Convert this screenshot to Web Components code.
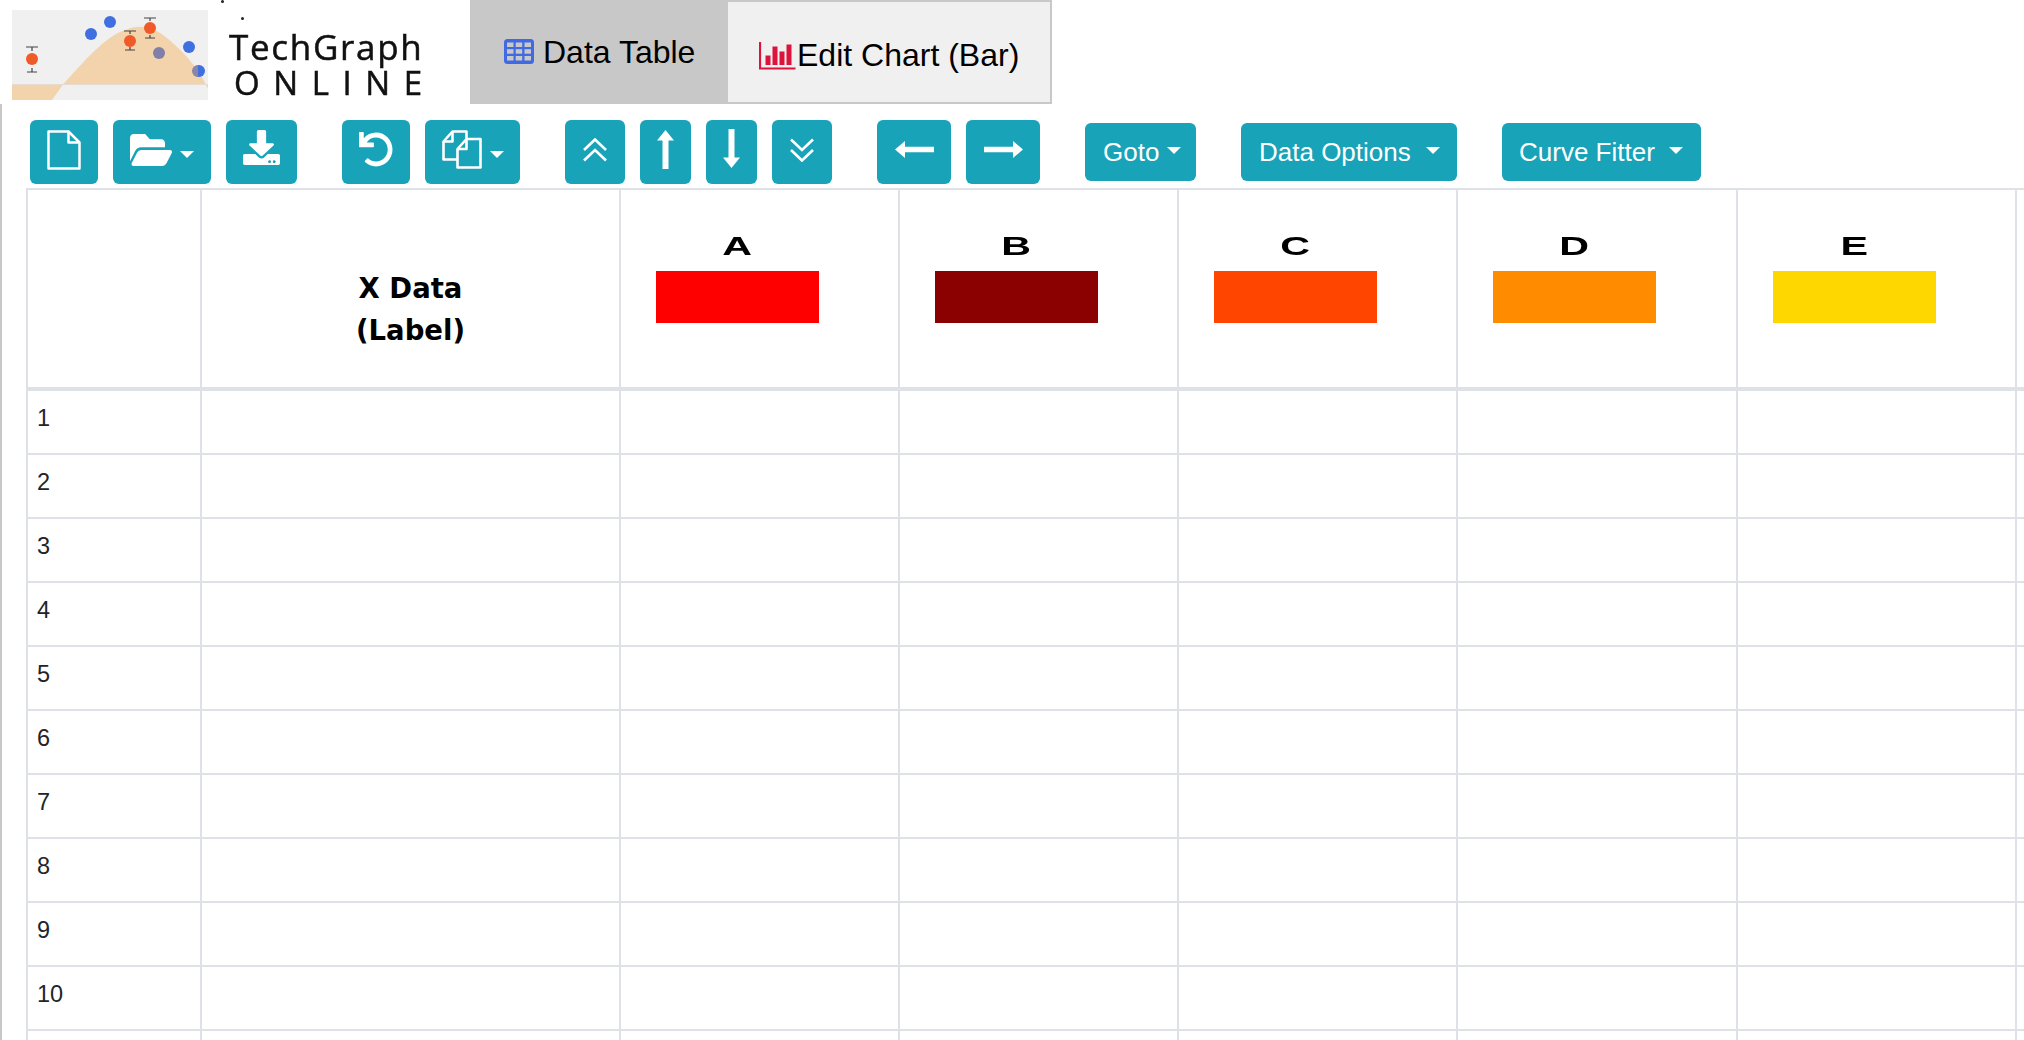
<!DOCTYPE html>
<html>
<head>
<meta charset="utf-8">
<title>TechGraph Online</title>
<style>
html, body { margin: 0; height: 100%; background: #fff; overflow: hidden; }
body { font-family: "Liberation Sans", Arial, sans-serif; color: #212529; }
</style>
</head>
<body>
<tg-header>
  <tg-logo slot="logo"></tg-logo>
  <tg-tab slot="tabs" active>
    <svg slot="icon" width="30" height="25" viewBox="0 0 30 25"><rect width="30" height="25" rx="3.5" fill="#4169e1"/><g fill="#c8c8c8"><rect x="3" y="3.5" width="6.5" height="4.5"/><rect x="11.7" y="3.5" width="6.5" height="4.5"/><rect x="20.5" y="3.5" width="6.5" height="4.5"/><rect x="3" y="10.2" width="6.5" height="4.5"/><rect x="11.7" y="10.2" width="6.5" height="4.5"/><rect x="20.5" y="10.2" width="6.5" height="4.5"/><rect x="3" y="17" width="6.5" height="4.5"/><rect x="11.7" y="17" width="6.5" height="4.5"/><rect x="20.5" y="17" width="6.5" height="4.5"/></g></svg>
    Data Table
  </tg-tab>
  <tg-tab slot="tabs">
    <svg slot="icon" width="37" height="28" viewBox="0 0 37 28"><path d="M1 0V26.5H36.5" fill="none" stroke="#dc143c" stroke-width="2.2"/><g fill="#dc143c"><rect x="6.5" y="13.5" width="5" height="9.5"/><rect x="13.5" y="4.5" width="5" height="18.5"/><rect x="20.5" y="9.5" width="5" height="13.5"/><rect x="27.5" y="2.5" width="5" height="20.5"/></g></svg>
    Edit Chart (Bar)
  </tg-tab>
</tg-header>
<tg-main>
  <tg-toolbar>
    <tool-group>
      <tool-btn style="width:68px"><svg width="34" height="40" viewBox="0 0 34 40" fill="none" stroke="#fff" stroke-width="2.5" stroke-linejoin="round"><path d="M1.5 1.5H21.5L32.5 12.5V38.5H1.5Z"/><path d="M21.5 1.5V12.5H32.5"/></svg></tool-btn>
      <tool-btn caret style="width:98px"><svg width="42" height="32" viewBox="0 64 576 384" preserveAspectRatio="none" fill="#fff"><path d="M572.694 292.093L500.27 416.248A63.997 63.997 0 0 1 444.989 448H45.025c-18.523 0-30.064-20.093-20.731-36.093l72.424-124.155A64 64 0 0 1 152 256h399.964c18.523 0 30.064 20.093 20.73 36.093zM152 224h328v-48c0-26.51-21.49-48-48-48H272l-64-64H48C21.49 64 0 85.49 0 112v278.046l69.077-118.418C86.214 242.25 117.989 224 152 224z"/></svg></tool-btn>
      <tool-btn style="width:71px"><svg style="margin-bottom:5px" width="37" height="35" viewBox="0 0 512 512" preserveAspectRatio="none" fill="#fff"><path d="M216 0h80c13.3 0 24 10.7 24 24v168h87.7c17.8 0 26.7 21.5 14.1 34.1L269.7 378.3c-7.5 7.5-19.8 7.5-27.3 0L90.1 226.1c-12.6-12.6-3.7-34.1 14.1-34.1H192V24c0-13.3 10.7-24 24-24zm296 376v112c0 13.3-10.7 24-24 24H24c-13.3 0-24-10.7-24-24V376c0-13.3 10.7-24 24-24h146.7l49 49c20.1 20.1 52.5 20.1 72.6 0l49-49H488c13.3 0 24 10.7 24 24zm-124 88c0-11-9-20-20-20s-20 9-20 20 9 20 20 20 20-9 20-20zm64 0c0-11-9-20-20-20s-20 9-20 20 9 20 20 20 20-9 20-20z"/></svg></tool-btn>
    </tool-group>
    <tool-group>
      <tool-btn style="width:68px"><svg width="34" height="35" viewBox="0 0 512 512" preserveAspectRatio="none" fill="#fff"><path d="M212.333 224.333H12c-6.627 0-12-5.373-12-12V12C0 5.373 5.373 0 12 0h48c6.627 0 12 5.373 12 12v78.112C117.773 39.279 184.26 7.47 258.175 8.007c136.906.994 246.448 111.623 246.157 248.532C504.041 393.258 393.12 504 256.333 504c-64.089 0-122.496-24.313-166.51-64.215-5.099-4.622-5.334-12.554-.467-17.42l33.967-33.967c4.474-4.474 11.662-4.717 16.401-.525C170.76 415.336 211.58 432 256.333 432c97.268 0 176-78.716 176-176 0-97.267-78.716-176-176-176-58.496 0-110.28 28.476-142.274 72.333h98.274c6.627 0 12 5.373 12 12v48c0 6.627-5.373 12-12 12z"/></svg></tool-btn>
      <tool-btn caret style="width:95px"><svg width="40" height="39" viewBox="0 0 40 39" fill="none" stroke="#fff" stroke-width="2.6" stroke-linejoin="round"><path d="M15 29.5H1.5V11.5L10.5 1.5H24.5V9"/><path d="M1.5 11.5H10.5V1.5"/><path d="M15.5 19L24.5 9H38.5V37.5H15.5Z"/><path d="M15.5 19H24.5V9"/></svg></tool-btn>
    </tool-group>
    <tool-group>
      <tool-btn style="width:60px"><svg width="24" height="24" viewBox="0 0 24 24" fill="none" stroke="#fff" stroke-width="2.6"><path d="M1 12L12 1.5 23 12"/><path d="M1 22.5L12 12 23 22.5"/></svg></tool-btn>
      <tool-btn style="width:51px"><svg width="17" height="39" viewBox="0 0 17 39" fill="#fff"><path d="M8.5 0L17 10.5H11.5V39H5.5V10.5H0Z"/></svg></tool-btn>
      <tool-btn style="width:51px"><svg style="margin-bottom:2px" width="17" height="39" viewBox="0 0 17 39" fill="#fff"><path d="M5.5 0H11.5V28.5H17L8.5 39 0 28.5H5.5Z"/></svg></tool-btn>
      <tool-btn style="width:60px"><svg width="24" height="24" viewBox="0 0 24 24" fill="none" stroke="#fff" stroke-width="2.6"><path d="M1 1.5L12 12 23 1.5"/><path d="M1 12L12 22.5 23 12"/></svg></tool-btn>
    </tool-group>
    <tool-group>
      <tool-btn style="width:74px"><svg width="39" height="17" viewBox="0 0 39 17" fill="#fff"><path d="M0 8.5L10 0V5.8H39V11.2H10V17Z"/></svg></tool-btn>
      <tool-btn style="width:74px"><svg width="39" height="17" viewBox="0 0 39 17" fill="#fff"><path d="M39 8.5L29 0V5.8H0V11.2H29V17Z"/></svg></tool-btn>
    </tool-group>
    <drop-btn style="width:111px;--caret-gap:8px">Goto</drop-btn>
    <drop-btn style="width:216px;--caret-gap:15px">Data Options</drop-btn>
    <drop-btn style="width:199px;--caret-gap:14px;--pad:17px">Curve Fitter</drop-btn>
  </tg-toolbar>
  <data-grid></data-grid>
</tg-main>

<script>
class TgHeader extends HTMLElement {
  constructor() {
    super();
    this.attachShadow({mode: "open"}).innerHTML = `
      <style>
        :host { display: flex; height: 104px; }
        .logo { display: block; width: 470px; flex: none; }
        .tabs { display: flex; }
      </style>
      <div class="logo"><slot name="logo"></slot></div>
      <div class="tabs"><slot name="tabs"></slot></div>
    `;
  }
}

class TgLogo extends HTMLElement {
  constructor() {
    super();
    this.attachShadow({mode: "open"}).innerHTML = `
      <style>
        :host { display: flex; position: relative; height: 104px; padding: 10px 0 0 12px; box-sizing: border-box; filter: blur(.6px); }
        svg { display: block; flex: none; }
        .name { margin-left: 21px; color: #111; font-family: "Open Sans", sans-serif; -webkit-text-stroke: .5px #111; }
        .tech { font-size: 35px; line-height: 36px; letter-spacing: 1.7px; margin-top: 19px; }
        .online { font-size: 33px; line-height: 36px; letter-spacing: 13.6px; margin: 0 0 0 5px; }
        i { position: absolute; width: 3px; height: 3px; border-radius: 50%; background: #222; }
      </style>
      <svg width="196" height="90" viewBox="12 10 196 90">
        <rect x="12" y="10" width="196" height="90" fill="#f0f0f0"/>
        <path d="M12 84.5H63C85 60 105 37 125 30 137 25 150 25 163 35 180 48 198 66 208 89V84.5H63L52 100H12Z" fill="#f2d3ab"/>
        <path d="M12 84.5H208" stroke="#e4dcd0" stroke-width="1"/>
        <g stroke="#444" stroke-width="1.2" fill="none"><path d="M26 47H38M32 47V51M32 68V72M27 72H37"/><path d="M124 31H136M130 31V34M130 47V50M125 50H135"/><path d="M144 18H156M150 18V21M150 35V38M145 38H155"/></g>
        <g fill="#3f6fe0"><circle cx="91" cy="34" r="6"/><circle cx="110" cy="22" r="6"/><circle cx="189" cy="47" r="6"/><circle cx="199" cy="71" r="6"/></g>
        <g fill="#f05a28"><circle cx="32" cy="59" r="6"/><circle cx="130" cy="41" r="6"/><circle cx="150" cy="28" r="6"/></g>
        <circle cx="159" cy="53" r="6" fill="#7f7fa8"/>
        <path d="M198 65a6 6 0 0 0 0 12z" fill="#8a86a8"/>
      </svg>
      <div class="name">
        <div class="tech">TechGraph</div>
        <div class="online">ONLINE</div>
      </div>
      <i style="left:221px;top:0"></i>
      <i style="left:241px;top:17px"></i>
    `;
  }
}

class TgTab extends HTMLElement {
  constructor() {
    super();
    this.attachShadow({mode: "open"}).innerHTML = `
      <style>
        :host { display: flex; align-items: center; box-sizing: border-box; height: 104px; width: 324px; padding: 7px 0 0 31px; border: 2px solid #c8c8c8; border-left: 0; background: #f0f0f0; color: #000; font-size: 32px; white-space: nowrap; }
        :host([active]) { width: 258px; padding: 0 0 0 34px; border: 0; background: #c8c8c8; }
        ::slotted(svg) { display: block; flex: none; margin-right: 1px; }
        :host([active]) ::slotted(svg) { margin: 0 9px 2px 0; }
      </style>
      <slot name="icon"></slot><slot></slot>
    `;
  }
}

class TgMain extends HTMLElement {
  constructor() {
    super();
    this.attachShadow({mode: "open"}).innerHTML = `
      <style>
        :host { display: block; height: 936px; overflow: hidden; border-left: 2px solid #c8c8c8; }
      </style>
      <slot></slot>
    `;
  }
}

class TgToolbar extends HTMLElement {
  constructor() {
    super();
    this.attachShadow({mode: "open"}).innerHTML = `
      <style>
        :host { display: flex; align-items: center; gap: 45px; height: 64px; padding: 16px 0 4px 28px; }
      </style>
      <slot></slot>
    `;
  }
}

class ToolGroup extends HTMLElement {
  constructor() {
    super();
    this.attachShadow({mode: "open"}).innerHTML = `
      <style>
        :host { display: flex; gap: 15px; }
      </style>
      <slot></slot>
    `;
  }
}

class ToolBtn extends HTMLElement {
  constructor() {
    super();
    this.attachShadow({mode: "open"}).innerHTML = `
      <style>
        :host { display: flex; align-items: center; justify-content: center; gap: 8px; box-sizing: border-box; height: 64px; padding-bottom: 5px; border-radius: 6px; background: #18a3b9; }
        ::slotted(svg) { display: block; }
        b { display: none; width: 0; height: 0; margin-top: 9px; border: 7px solid transparent; border-top-color: #fff; border-bottom: 0; }
        :host([caret]) b { display: block; }
      </style>
      <slot></slot><b></b>
    `;
  }
}

class DropBtn extends HTMLElement {
  constructor() {
    super();
    this.attachShadow({mode: "open"}).innerHTML = `
      <style>
        :host { display: flex; align-items: center; box-sizing: border-box; height: 58px; padding: 0 0 0 var(--pad, 18px); border-radius: 6px; background: #18a3b9; color: #fff; font-size: 26px; white-space: nowrap; }
        b { width: 0; height: 0; margin: 0 0 3px var(--caret-gap); border: 7px solid transparent; border-top-color: #fff; border-bottom: 0; }
      </style>
      <slot></slot><b></b>
    `;
  }
}

const SERIES = [
  ["A", "#ff0000"], ["B", "#8b0000"], ["C", "#ff4500"], ["D", "#ff8c00"], ["E", "#ffd700"]
];

class DataGrid extends HTMLElement {
  constructor() {
    super();
    let cols = SERIES.length + 2;
    let head = `<div class="cell"></div><div class="cell xhead">X Data<br>(Label)</div>`;
    SERIES.forEach(s => {
      head += `<div class="cell serie"><div class="name"><span>${s[0]}</span></div><div class="swatch" style="background:${s[1]}"></div></div>`;
    });
    head += `<div class="cell"></div>`;

    let rows = "";
    for (let i = 1; i <= 11; i++) {
      rows += `<div class="cell num">${i <= 10 ? i : ""}</div>`;
      rows += `<div class="cell"></div>`.repeat(cols);
    }

    this.attachShadow({mode: "open"}).innerHTML = `
      <style>
        :host { display: block; margin-left: 24px; border-top: 2px solid #dee2e6; }
        .grid { display: grid; grid-template-columns: 174px 419px 279px 279px 279px 280px 279px 279px; grid-template-rows: 201px; grid-auto-rows: 64px; }
        .cell { box-sizing: border-box; border-left: 2px solid #dee2e6; border-bottom: 2px solid #dee2e6; min-width: 0; }
        .cell:nth-child(-n+8) { border-bottom-width: 4px; }
        .xhead { display: flex; align-items: center; justify-content: center; padding-top: 41px; text-align: center; color: #000; font: bold 27.5px/42px "DejaVu Sans", sans-serif; }
        .serie { padding: 42px 0 0 35px; }
        .name { width: 163px; height: 39px; text-align: center; color: #000; font: bold 25px/28px "Liberation Sans", sans-serif; }
        .name span { display: inline-block; transform: scaleX(1.65); }
        .swatch { width: 163px; height: 52px; }
        .num { padding: 0 0 7px 9px; display: flex; align-items: center; font-size: 23.5px; }
      </style>
      <div class="grid">${head}${rows}</div>
    `;
  }
}

customElements.define("tg-header", TgHeader);
customElements.define("tg-logo", TgLogo);
customElements.define("tg-tab", TgTab);
customElements.define("tg-main", TgMain);
customElements.define("tg-toolbar", TgToolbar);
customElements.define("tool-group", ToolGroup);
customElements.define("tool-btn", ToolBtn);
customElements.define("drop-btn", DropBtn);
customElements.define("data-grid", DataGrid);
</script>
</body>
</html>
